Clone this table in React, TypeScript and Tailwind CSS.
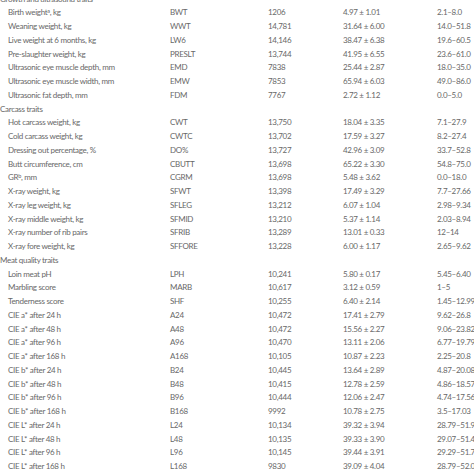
import React from "react";

type Row =
  | { kind: "group"; label: React.ReactNode }
  | { kind: "data"; label: React.ReactNode; abbr: string; n: string; mean: string; range: string };

const sup = (s: string) => <span className="text-[5.5px] relative -top-[2.5px]">{s}</span>;

const rows: Row[] = [
  { kind: "group", label: "Growth and ultrasound traits" },
  { kind: "data", label: <>Birth weight{sup("a")}, kg</>, abbr: "BWT", n: "1206", mean: "4.97 ± 1.01", range: "2.1–8.0" },
  { kind: "data", label: "Weaning weight, kg", abbr: "WWT", n: "14,781", mean: "31.64 ± 6.00", range: "14.0–51.8" },
  { kind: "data", label: "Live weight at 6 months, kg", abbr: "LW6", n: "14,146", mean: "38.47 ± 6.38", range: "19.6–60.5" },
  { kind: "data", label: "Pre-slaughter weight, kg", abbr: "PRESLT", n: "13,744", mean: "41.95 ± 6.55", range: "23.6–61.0" },
  { kind: "data", label: "Ultrasonic eye muscle depth, mm", abbr: "EMD", n: "7838", mean: "25.44 ± 2.87", range: "18.0–35.0" },
  { kind: "data", label: "Ultrasonic eye muscle width, mm", abbr: "EMW", n: "7853", mean: "65.94 ± 6.03", range: "49.0–86.0" },
  { kind: "data", label: "Ultrasonic fat depth, mm", abbr: "FDM", n: "7767", mean: "2.72 ± 1.12", range: "0.0–5.0" },
  { kind: "group", label: "Carcass traits" },
  { kind: "data", label: "Hot carcass weight, kg", abbr: "CWT", n: "13,750", mean: "18.04 ± 3.35", range: "7.1–27.9" },
  { kind: "data", label: "Cold carcass weight, kg", abbr: "CWTC", n: "13,702", mean: "17.59 ± 3.27", range: "8.2–27.4" },
  { kind: "data", label: "Dressing out percentage, %", abbr: "DO%", n: "13,727", mean: "42.96 ± 3.09", range: "33.7–52.8" },
  { kind: "data", label: "Butt circumference, cm", abbr: "CBUTT", n: "13,698", mean: "65.22 ± 3.30", range: "54.8–75.0" },
  { kind: "data", label: <>GR{sup("b")}, mm</>, abbr: "CGRM", n: "13,698", mean: "5.48 ± 3.62", range: "0.0–18.0" },
  { kind: "data", label: "X-ray weight, kg", abbr: "SFWT", n: "13,398", mean: "17.49 ± 3.29", range: "7.7–27.66" },
  { kind: "data", label: "X-ray leg weight, kg", abbr: "SFLEG", n: "13,212", mean: "6.07 ± 1.04", range: "2.98–9.34" },
  { kind: "data", label: "X-ray middle weight, kg", abbr: "SFMID", n: "13,210", mean: "5.37 ± 1.14", range: "2.03–8.94" },
  { kind: "data", label: "X-ray number of rib pairs", abbr: "SFRIB", n: "13,289", mean: "13.01 ± 0.33", range: "12–14" },
  { kind: "data", label: "X-ray fore weight, kg", abbr: "SFFORE", n: "13,228", mean: "6.00 ± 1.17", range: "2.65–9.62" },
  { kind: "group", label: "Meat quality traits" },
  { kind: "data", label: "Loin meat pH", abbr: "LPH", n: "10,241", mean: "5.80 ± 0.17", range: "5.45–6.40" },
  { kind: "data", label: "Marbling score", abbr: "MARB", n: "10,617", mean: "3.12 ± 0.59", range: "1–5" },
  { kind: "data", label: "Tenderness score", abbr: "SHF", n: "10,255", mean: "6.40 ± 2.14", range: "1.45–12.99" },
  { kind: "data", label: "CIE a* after 24 h", abbr: "A24", n: "10,472", mean: "17.41 ± 2.79", range: "9.62–26.8" },
  { kind: "data", label: "CIE a* after 48 h", abbr: "A48", n: "10,472", mean: "15.56 ± 2.27", range: "9.06–23.82" },
  { kind: "data", label: "CIE a* after 96 h", abbr: "A96", n: "10,470", mean: "13.11 ± 2.06", range: "6.77–19.79" },
  { kind: "data", label: "CIE a* after 168 h", abbr: "A168", n: "10,105", mean: "10.87 ± 2.23", range: "2.25–20.8" },
  { kind: "data", label: "CIE b* after 24 h", abbr: "B24", n: "10,445", mean: "13.64 ± 2.89", range: "4.87–20.08" },
  { kind: "data", label: "CIE b* after 48 h", abbr: "B48", n: "10,415", mean: "12.78 ± 2.59", range: "4.86–18.57" },
  { kind: "data", label: "CIE b* after 96 h", abbr: "B96", n: "10,444", mean: "12.06 ± 2.47", range: "4.74–17.56" },
  { kind: "data", label: "CIE b* after 168 h", abbr: "B168", n: "9992", mean: "10.78 ± 2.75", range: "3.5–17.03" },
  { kind: "data", label: "CIE L* after 24 h", abbr: "L24", n: "10,134", mean: "39.32 ± 3.94", range: "28.79–51.93" },
  { kind: "data", label: "CIE L* after 48 h", abbr: "L48", n: "10,135", mean: "39.33 ± 3.90", range: "29.07–51.46" },
  { kind: "data", label: "CIE L* after 96 h", abbr: "L96", n: "10,145", mean: "39.44 ± 3.91", range: "29.29–51.75" },
  { kind: "data", label: "CIE L* after 168 h", abbr: "L168", n: "9830", mean: "39.09 ± 4.04", range: "28.79–52.06" },
];

export default function App() {
  return (
    <div
      className="w-[474px] h-[474px] overflow-hidden bg-white text-[#686868] text-[8px] tracking-[-0.3px]"
      style={{ fontFamily: "Lato, 'Liberation Sans', sans-serif" }}
    >
      <div className="-mt-[8.3px] flex flex-col">
        {rows.map((r, i) =>
          r.kind === "group" ? (
            <div key={i} className="h-[13.76px] flex items-center whitespace-nowrap">
              {r.label}
            </div>
          ) : (
            <div
              key={i}
              className="h-[13.76px] grid grid-cols-[170px_98px_75px_94px_1fr] items-center whitespace-nowrap"
            >
              <div className="pl-[8px]">{r.label}</div>
              <div>{r.abbr}</div>
              <div>{r.n}</div>
              <div>{r.mean}</div>
              <div>{r.range}</div>
            </div>
          )
        )}
      </div>
    </div>
  );
}
